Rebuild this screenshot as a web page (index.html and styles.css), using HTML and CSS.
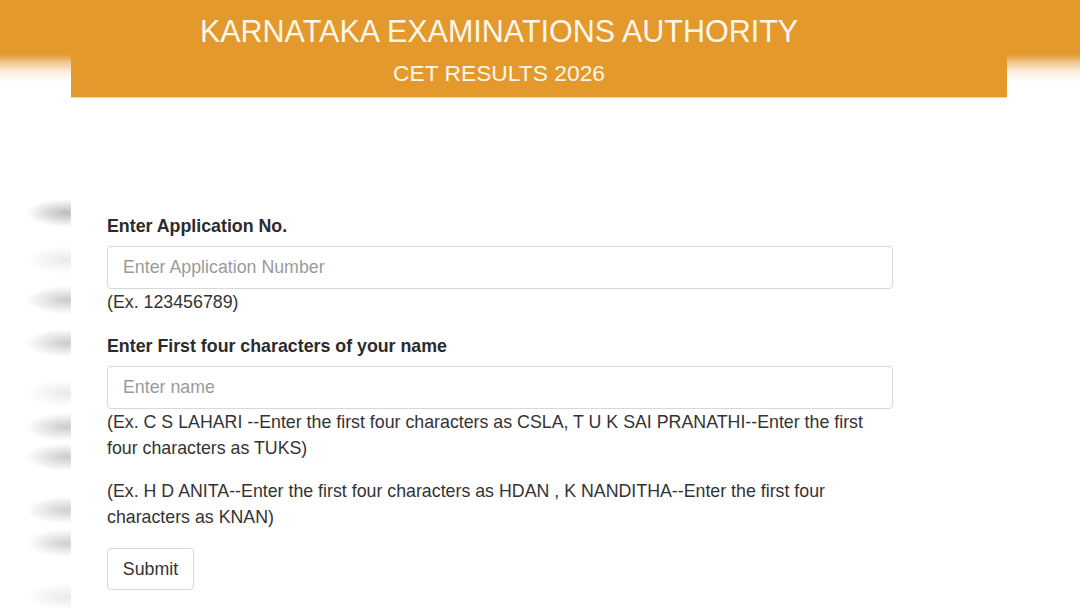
FILE: index.html
```html
<!DOCTYPE html>
<html lang="en">
<head>
<meta charset="utf-8">
<title>KEA CET Results 2026</title>
<link rel="stylesheet" href="styles.css">
</head>
<body>
<div class="page">
  <div class="gutter">
    <div class="blob b1"></div>
    <div class="blob b2"></div>
    <div class="blob b3"></div>
    <div class="blob b4"></div>
    <div class="blob b5"></div>
    <div class="blob b6"></div>
    <div class="blob b7"></div>
    <div class="blob b8"></div>
    <div class="blob b9"></div>
    <div class="blob b10"></div>
  </div>
  <div class="panel">
    <header class="head">
      <h1 class="title">KARNATAKA EXAMINATIONS AUTHORITY</h1>
      <h2 class="subtitle">CET RESULTS 2026</h2>
    </header>
    <form class="form">
      <label class="label" for="app">Enter Application No.</label>
      <input class="field" id="app" type="text" placeholder="Enter Application Number">
      <p class="hint">(Ex. 123456789)</p>
      <label class="label label2" for="nm">Enter First four characters of your name</label>
      <input class="field" id="nm" type="text" placeholder="Enter name">
      <p class="hint">(Ex. C S LAHARI --Enter the first four characters as CSLA, T U K SAI PRANATHI--Enter the first four characters as TUKS)</p>
      <p class="hint hint2">(Ex. H D ANITA--Enter the first four characters as HDAN , K NANDITHA--Enter the first four characters as KNAN)</p>
      <button class="submit" type="button">Submit</button>
    </form>
  </div>
</div>
</body>
</html>
```

FILE: styles.css
```css
html, body {
  margin: 0;
  padding: 0;
}
body {
  width: 1080px;
  height: 607px;
  overflow: hidden;
  background: linear-gradient(to bottom, #e3992c 0, #e3992c 54px, #f0c993 63px, #fbefe0 72px, #ffffff 82px, #ffffff 100%);
  font-family: "Liberation Sans", Arial, sans-serif;
  color: #333333;
}
.page {
  display: flex;
  align-items: flex-start;
}
.gutter {
  width: 71px;
  flex: none;
  height: 607px;
  overflow: hidden;
  display: flex;
  flex-direction: column;
  padding-top: 199px;
  box-sizing: border-box;
}
.blob {
  margin-left: 26px;
  width: 80px;
  height: 28px;
  flex: none;
  margin-bottom: -12px;
  background: radial-gradient(ellipse closest-side at 50% 50%, rgba(160,160,160,1) 0%, rgba(160,160,160,0.55) 45%, rgba(160,160,160,0) 100%);
}
.b1 { margin-top: 0; opacity: 0.7; }
.b2 { margin-top: 31px; opacity: 0.22; }
.b3 { margin-top: 24px; opacity: 0.55; }
.b4 { margin-top: 27px; opacity: 0.55; }
.b5 { margin-top: 34px; opacity: 0.22; }
.b6 { margin-top: 18px; opacity: 0.55; }
.b7 { margin-top: 14px; opacity: 0.55; }
.b8 { margin-top: 37px; opacity: 0.5; }
.b9 { margin-top: 17px; opacity: 0.5; }
.b10 { margin-top: 38px; opacity: 0.22; }

.panel {
  width: 936px;
  flex: none;
  background: #ffffff;
  min-height: 607px;
}
.head {
  height: 97px;
  background: #e3992c;
  border-bottom: 1px solid #f4d9a4;
  box-sizing: content-box;
  padding-right: 80px;
  text-align: center;
  color: #fdf6ea;
  overflow: hidden;
}
.title {
  margin: 0;
  padding-top: 13px;
  font-size: 30.5px;
  font-weight: normal;
  line-height: 36px;
}
.subtitle {
  margin: 0;
  padding-top: 11px;
  font-size: 22.8px;
  font-weight: normal;
  line-height: 26px;
}
.form {
  display: flex;
  flex-direction: column;
  align-items: flex-start;
  padding: 117px 0 0 36px;
}
.label {
  font-weight: bold;
  font-size: 17.8px;
  line-height: 22px;
  color: #2b2b2b;
  margin-bottom: 9px;
}
.label2 {
  margin-top: 20px;
}
.field {
  width: 786px;
  height: 43px;
  box-sizing: border-box;
  border: 1px solid #d8d8d8;
  border-radius: 4px;
  padding: 0 15px;
  font-family: "Liberation Sans", Arial, sans-serif;
  font-size: 17.8px;
  color: #333;
  background: #fff;
  margin: 0;
}
.field::placeholder {
  color: #9a9a9a;
}
.hint {
  margin: 0;
  width: 786px;
  font-size: 17.8px;
  line-height: 26px;
  color: #333;
}
.hint2 {
  margin-top: 17px;
}
.submit {
  margin-top: 18px;
  width: 87px;
  height: 42px;
  border: 1px solid #d8d8d8;
  border-radius: 4px;
  background: #fff;
  font-family: "Liberation Sans", Arial, sans-serif;
  font-size: 17.8px;
  color: #333;
  padding: 0;
}
```
